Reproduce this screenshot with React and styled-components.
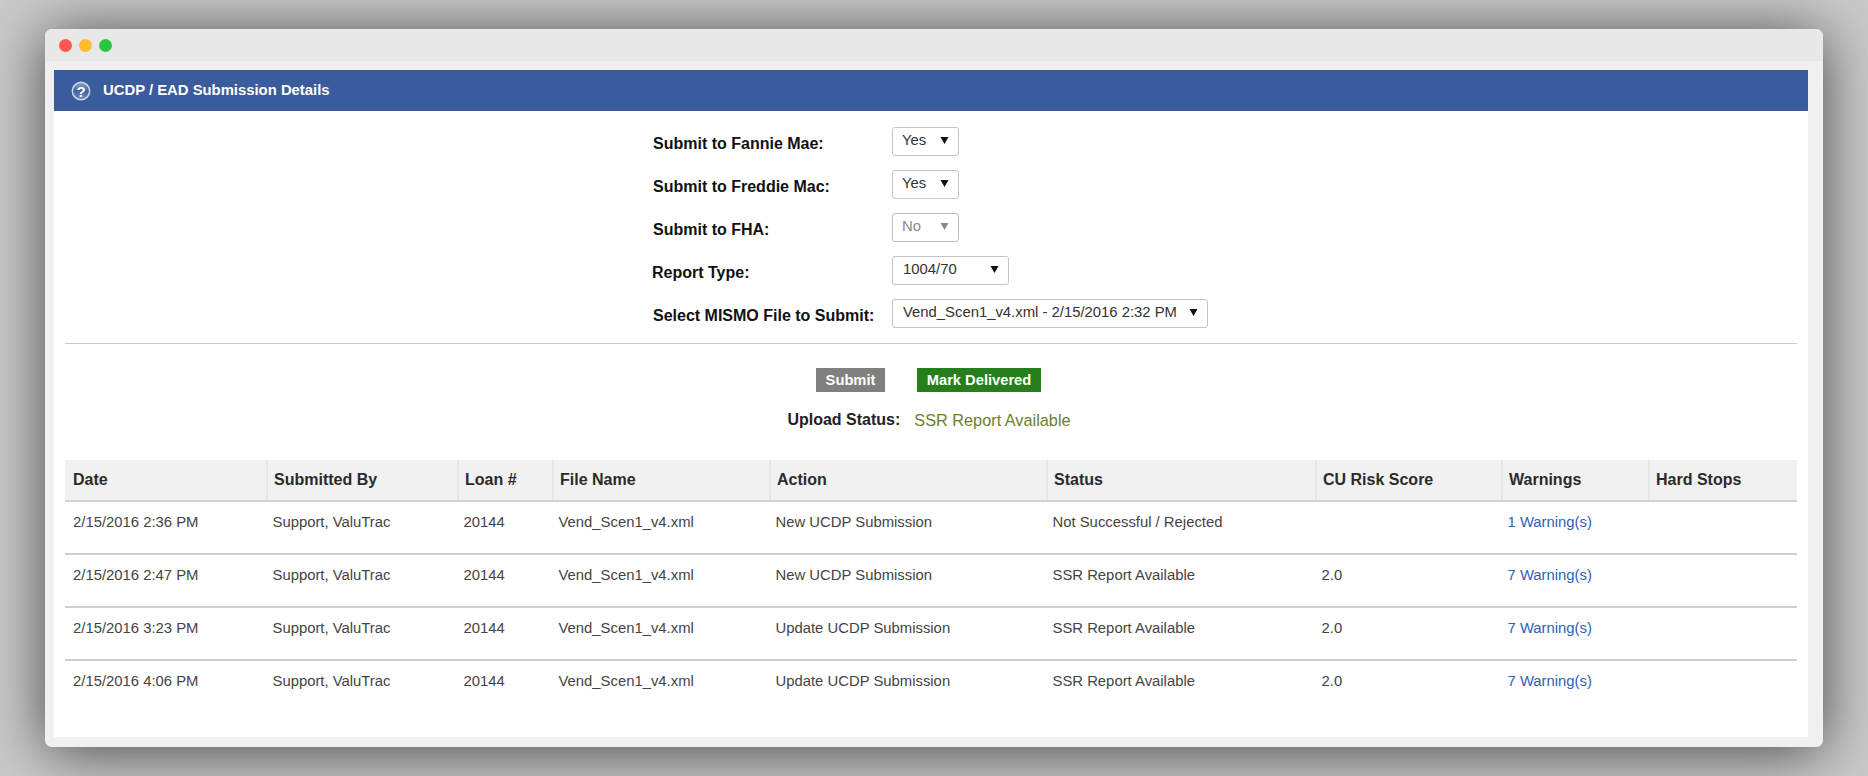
import React from 'react'
import styled, { createGlobalStyle } from 'styled-components'

const GlobalStyle = createGlobalStyle`
  html, body {
    margin: 0;
    height: 776px;
    overflow: hidden;
    background: #cacaca;
    font-family: "Liberation Sans", Arial, sans-serif;
  }
`

const Stage = styled.div`
  padding: 29px 45px;
`

const Window = styled.div`
  width: 1778px;
  height: 718px;
  border-radius: 7px;
  overflow: hidden;
  background: #f0f0f0;
  box-shadow: 0 5px 60px rgba(0, 0, 0, 0.65);
  display: flex;
  flex-direction: column;
`

const TitleBar = styled.div`
  height: 32px;
  flex: none;
  background: #e8e8e8;
  display: flex;
  align-items: center;
  gap: 7px;
  padding-left: 14px;
`

const Light = styled.span`
  width: 13px;
  height: 13px;
  border-radius: 50%;
  background: ${props => props.color};
`

const Panel = styled.div`
  flex: 1;
  margin: 9px 15px 10px 9px;
  background: #fff;
  display: flex;
  flex-direction: column;
`

const PanelHeader = styled.div`
  height: 41px;
  flex: none;
  background: #3b5c9c;
  color: #fff;
  font-size: 14.85px;
  font-weight: bold;
  display: flex;
  align-items: center;
  gap: 12px;
  padding-left: 17px;
`

const PanelTitle = styled.span`
  margin-bottom: 2px;
`

const FormArea = styled.div`
  padding: 16px 0 0 599px;
  display: flex;
  flex-direction: column;
  gap: 14px;
`

const FormRow = styled.div`
  height: 29px;
  display: flex;
  align-items: center;
`

const Label = styled.label`
  width: 239px;
  flex: none;
  padding-top: 4px;
  font-size: 16px;
  font-weight: bold;
  color: #111;
  margin-left: ${props => (props.nudge ? '-1px' : '0')};
  margin-right: ${props => (props.nudge ? '1px' : '0')};
`

const SelectBox = styled.div`
  box-sizing: border-box;
  width: ${props => props.width}px;
  height: 29px;
  border: 1px solid ${props => (props.disabled ? '#bdbdbd' : '#c4c4c4')};
  border-radius: 3px;
  background: #fff;
  color: ${props => (props.disabled ? '#8a8a8a' : '#333')};
  font-size: 14.85px;
  display: flex;
  align-items: center;
  justify-content: space-between;
  padding: 0 9px 3px ${props => (props.width > 100 ? 10 : 9)}px;
`

const Divider = styled.div`
  height: 1px;
  background: #c9c9c9;
  margin: 15px 11px 0 11px;
`

const Actions = styled.div`
  margin-top: 24px;
  display: flex;
  justify-content: center;
  gap: 32px;
  padding-right: 5px;
`

const ActionButton = styled.button`
  height: 24px;
  border: 0;
  padding: 0;
  width: ${props => props.width}px;
  background: ${props => props.bg};
  color: #fff;
  font-family: inherit;
  font-size: 14.7px;
  font-weight: bold;
`

const UploadRow = styled.div`
  margin-top: 19px;
  display: flex;
  justify-content: center;
  gap: 14px;
  padding-right: 4px;
  font-size: 16px;
  line-height: 18px;
`

const UploadLabel = styled.span`
  font-weight: bold;
  color: #222;
`

const UploadValue = styled.span`
  font-size: 16.3px;
  color: #6f7d2b;
`

const Table = styled.div`
  margin: 31px 11px 0 11px;
`

const columns = '201px 191px 95px 217px 277px 269px 186px 147px 149px'

const HeadRow = styled.div`
  display: grid;
  grid-template-columns: ${columns};
  height: 42px;
  box-sizing: border-box;
  background: #f1f1f1;
  border-bottom: 2px solid #d2d2d2;
`

const HeadCell = styled.div`
  border-left: 2px solid #e6e6e6;
  padding-left: 6px;
  font-size: 16px;
  font-weight: bold;
  color: #2b2b2b;
  line-height: 40px;

  &:first-child {
    border-left: 0;
    padding-left: 8px;
  }
`

const Row = styled.div`
  display: grid;
  grid-template-columns: ${columns};
  height: 53px;
  box-sizing: border-box;
  border-bottom: ${props => (props.last ? '0' : '2px solid #cfcfcf')};
`

const Cell = styled.div`
  padding: 10px 0 0 6.5px;
  font-size: 14.85px;
  line-height: 20px;
  color: #444;
  white-space: nowrap;

  &:first-child {
    padding-left: 8px;
  }
`

const WarningLink = styled.a`
  color: #2f5fb5;
  text-decoration: none;
`

const HelpIcon = () => (
  <svg width="20" height="20" viewBox="0 0 20 20">
    <defs>
      <linearGradient id="helpFill" x1="0" y1="0" x2="0" y2="1">
        <stop offset="0" stopColor="#93a9cf" />
        <stop offset="0.5" stopColor="#41649f" />
        <stop offset="1" stopColor="#6f8abb" />
      </linearGradient>
    </defs>
    <circle cx="10" cy="10" r="8.7" fill="url(#helpFill)" stroke="#cbd4e6" strokeWidth="1.5" />
    <text x="10" y="15.5" textAnchor="middle" fontSize="15" fontWeight="bold" fontFamily="Liberation Sans, sans-serif" fill="#fff">?</text>
  </svg>
)

const Caret = ({ color }) => (
  <svg width="9" height="9" viewBox="0 0 9 9">
    <path d="M0.5 1 H8.5 L4.5 8 Z" fill={color} />
  </svg>
)

const Select = ({ value, width, disabled }) => (
  <SelectBox width={width} disabled={disabled}>
    <span>{value}</span>
    <Caret color={disabled ? '#8a8a8a' : '#111'} />
  </SelectBox>
)

const fields = [
  { label: 'Submit to Fannie Mae:', value: 'Yes', width: 67 },
  { label: 'Submit to Freddie Mac:', value: 'Yes', width: 67 },
  { label: 'Submit to FHA:', value: 'No', width: 67, disabled: true },
  { label: 'Report Type:', value: '1004/70', width: 117, nudge: true },
  { label: 'Select MISMO File to Submit:', value: 'Vend_Scen1_v4.xml - 2/15/2016 2:32 PM', width: 316 }
]

const headers = ['Date', 'Submitted By', 'Loan #', 'File Name', 'Action', 'Status', 'CU Risk Score', 'Warnings', 'Hard Stops']

const rows = [
  ['2/15/2016 2:36 PM', 'New UCDP Submission', 'Not Successful / Rejected', '', '1 Warning(s)'],
  ['2/15/2016 2:47 PM', 'New UCDP Submission', 'SSR Report Available', '2.0', '7 Warning(s)'],
  ['2/15/2016 3:23 PM', 'Update UCDP Submission', 'SSR Report Available', '2.0', '7 Warning(s)'],
  ['2/15/2016 4:06 PM', 'Update UCDP Submission', 'SSR Report Available', '2.0', '7 Warning(s)']
]

export default function App() {
  return (
    <Stage>
      <GlobalStyle />
      <Window>
        <TitleBar>
          <Light color="#fc5753" />
          <Light color="#fdbc2c" />
          <Light color="#27c83f" />
        </TitleBar>
        <Panel>
          <PanelHeader>
            <HelpIcon />
            <PanelTitle>UCDP / EAD Submission Details</PanelTitle>
          </PanelHeader>
          <FormArea>
            {fields.map(field => (
              <FormRow key={field.label}>
                <Label nudge={field.nudge}>{field.label}</Label>
                <Select value={field.value} width={field.width} disabled={field.disabled} />
              </FormRow>
            ))}
          </FormArea>
          <Divider />
          <Actions>
            <ActionButton width={69} bg="#808080">Submit</ActionButton>
            <ActionButton width={124} bg="#267f1b">Mark Delivered</ActionButton>
          </Actions>
          <UploadRow>
            <UploadLabel>Upload Status:</UploadLabel>
            <UploadValue>SSR Report Available</UploadValue>
          </UploadRow>
          <Table>
            <HeadRow>
              {headers.map(header => <HeadCell key={header}>{header}</HeadCell>)}
            </HeadRow>
            {rows.map((row, i) => (
              <Row key={row[0]} last={i === rows.length - 1}>
                <Cell>{row[0]}</Cell>
                <Cell>Support, ValuTrac</Cell>
                <Cell>20144</Cell>
                <Cell>Vend_Scen1_v4.xml</Cell>
                <Cell>{row[1]}</Cell>
                <Cell>{row[2]}</Cell>
                <Cell>{row[3]}</Cell>
                <Cell><WarningLink href="#">{row[4]}</WarningLink></Cell>
                <Cell />
              </Row>
            ))}
          </Table>
        </Panel>
      </Window>
    </Stage>
  )
}
